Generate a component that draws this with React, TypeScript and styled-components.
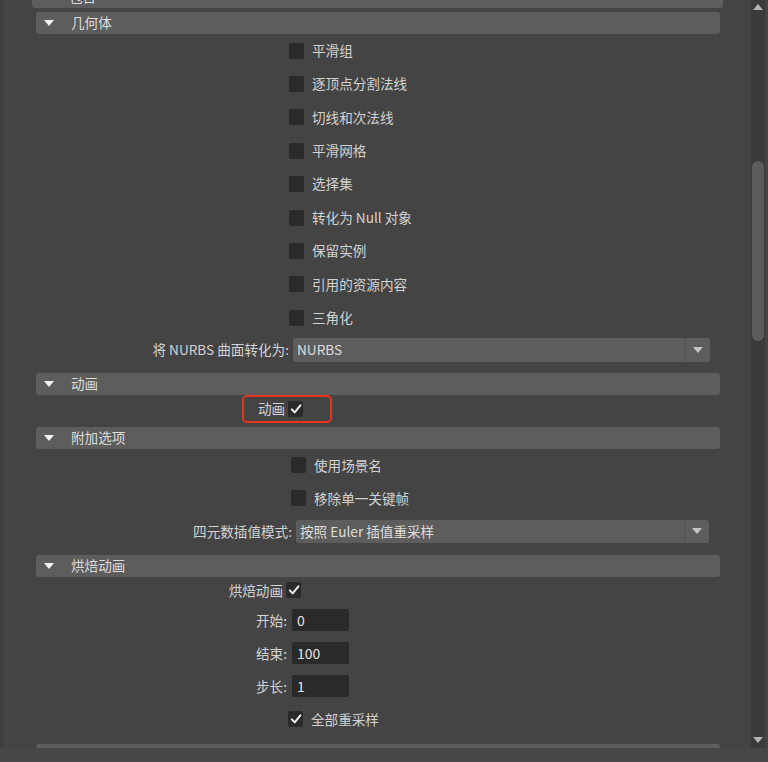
import React from "react";
import styled, { createGlobalStyle } from "styled-components";

const Global = createGlobalStyle`
  html, body { margin: 0; padding: 0; background: #444444; }
  body {
    font-family: "Noto Sans CJK SC", "Noto Sans", sans-serif;
    font-size: 13.6px;
    color: #d2d2d2;
  }
`;

const Window = styled.div`
  width: 768px;
  height: 762px;
  display: flex;
  flex-direction: column;
  overflow: hidden;
  background: #444444;
`;

const Main = styled.div`
  height: 748px;
  display: flex;
  flex-direction: row;
`;

const Content = styled.div`
  flex: 1;
  border-left: 4px solid #3f3f3f;
  overflow: hidden;
`;

const ScrollInner = styled.div`
  margin-top: -14px;
  padding: 0 28px 0 28px;
`;

const Children = styled.div`
  padding: 4px 3px 0 4px;
`;

const HeaderBar = styled.div`
  height: 22px;
  background: #5d5d5d;
  border-radius: 3px;
  display: flex;
  align-items: center;
  flex-shrink: 0;
`;

const Triangle = styled.span<{ $color?: string }>`
  width: 0;
  height: 0;
  border-left: 5.5px solid transparent;
  border-right: 5.5px solid transparent;
  border-top: 6px solid ${(p) => p.$color || "#f2f2f2"};
  margin-left: 8px;
`;

const HeaderTitle = styled.span<{ $ml: number }>`
  margin-left: ${(p) => p.$ml}px;
  color: #dcdcdc;
  line-height: 1;
  white-space: nowrap;
`;

const Body = styled.div<{ $pb: number }>`
  padding-bottom: ${(p) => p.$pb}px;
`;

const Row = styled.div<{ $col: number; $h: number; $mt?: number }>`
  display: grid;
  grid-template-columns: ${(p) => p.$col}px 1fr;
  align-items: center;
  height: ${(p) => p.$h}px;
  margin-top: ${(p) => p.$mt || 0}px;
`;

const TopRow = styled(Row)`
  align-items: start;
`;

const RowLabel = styled.span<{ $gap: number }>`
  text-align: right;
  padding-right: ${(p) => p.$gap}px;
  white-space: nowrap;
  line-height: 1;
`;

const Ctrl = styled.div`
  display: flex;
  align-items: center;
`;

const Box = styled.span`
  width: 15px;
  height: 16px;
  border-radius: 2px;
  background: #2a2a2a;
  display: inline-flex;
  align-items: center;
  justify-content: center;
  flex-shrink: 0;
`;

const CheckText = styled.span`
  margin-left: 8px;
  line-height: 1;
  white-space: nowrap;
`;

const InlineLabel = styled.span`
  margin-right: 3px;
  line-height: 1;
  white-space: nowrap;
`;

const Highlight = styled.div`
  display: inline-flex;
  align-items: center;
  height: 24px;
  border: 2px solid #e8331f;
  border-radius: 5px;
  padding: 0 27px 0 14px;
`;

const Dropdown = styled.div<{ $w: number; $h: number }>`
  width: ${(p) => p.$w}px;
  height: ${(p) => p.$h}px;
  background: #5d5d5d;
  border-radius: 3px;
  display: flex;
  align-items: stretch;
`;

const DropValue = styled.span`
  flex: 1;
  display: flex;
  align-items: center;
  padding-left: 4px;
  color: #dedede;
  line-height: 1;
  white-space: nowrap;
`;

const DropArrow = styled.span`
  width: 24px;
  border-left: 1px solid #525252;
  display: flex;
  align-items: center;
  justify-content: center;
`;

const NumField = styled.div`
  width: 57px;
  height: 22px;
  background: #2a2a2a;
  border-radius: 2px;
  display: flex;
  align-items: center;
  padding-left: 5px;
  box-sizing: border-box;
  color: #e2e2e2;
  font-size: 14px;
  line-height: 1;
`;

const Scrollbar = styled.div`
  width: 14px;
  margin-right: 3px;
  background: #3a3a3a;
  display: flex;
  flex-direction: column;
  align-items: center;
`;

const ScrollArrow = styled.span<{ $up?: boolean }>`
  width: 0;
  height: 0;
  border-left: 5.5px solid transparent;
  border-right: 5.5px solid transparent;
  ${(p) =>
    p.$up
      ? "border-bottom: 6px solid #b4b4b4; margin-top: 4px;"
      : "border-top: 6px solid #b4b4b4; margin-bottom: 5px;"}
`;

const Thumb = styled.div`
  width: 12px;
  height: 180px;
  margin-top: 151px;
  border-radius: 6px;
  background: #5b5b5b;
`;

const Spacer = styled.div`
  flex: 1;
`;

const BottomStrip = styled.div`
  height: 14px;
  background: #474747;
`;

const Check = () => (
  <svg width="12" height="12" viewBox="0 0 12 12">
    <path d="M1.8 6.4 L4.7 9.4 L10.4 2.4" fill="none" stroke="#f0f0f0" strokeWidth="2" strokeLinecap="round" strokeLinejoin="round" />
  </svg>
);

const Header = ({ title, ml = 17 }: { title?: string; ml?: number }) => (
  <HeaderBar>
    <Triangle />
    {title && <HeaderTitle $ml={ml}>{title}</HeaderTitle>}
  </HeaderBar>
);

const CheckRow = ({ label, col, h, checked }: { label: string; col: number; h: number; checked?: boolean }) => (
  <Row $col={col} $h={h}>
    <span />
    <Ctrl>
      <Box>{checked && <Check />}</Box>
      <CheckText>{label}</CheckText>
    </Ctrl>
  </Row>
);

const DropRow = ({ label, value, col, w, h, mt }: { label: string; value: string; col: number; w: number; h: number; mt: number }) => (
  <Row $col={col} $h={h} $mt={mt}>
    <RowLabel $gap={4}>{label}</RowLabel>
    <Dropdown $w={w} $h={h}>
      <DropValue>{value}</DropValue>
      <DropArrow>
        <Triangle $color="#c4c4c4" style={{ marginLeft: 0 }} />
      </DropArrow>
    </Dropdown>
  </Row>
);

const NumRow = ({ label, value }: { label: string; value: string }) => (
  <Row $col={256} $h={33}>
    <RowLabel $gap={5}>{label}</RowLabel>
    <NumField>{value}</NumField>
  </Row>
);

const geometry = ["平滑组", "逐顶点分割法线", "切线和次法线", "平滑网格", "选择集", "转化为 Null 对象", "保留实例", "引用的资源内容", "三角化"];

export default function App() {
  return (
    <>
      <Global />
      <Window>
        <Main>
          <Content>
            <ScrollInner>
              <Header title="包含" ml={19} />
              <Children>
                <Header title="几何体" />
                <Body $pb={11}>
                  {geometry.map((g) => (
                    <CheckRow key={g} label={g} col={253} h={33.4} />
                  ))}
                  <DropRow label="将 NURBS 曲面转化为:" value="NURBS" col={257} w={417} h={24} mt={3.4} />
                </Body>

                <Header title="动画" />
                <Body $pb={0}>
                  <TopRow $col={206} $h={32}>
                    <span />
                    <Ctrl>
                      <Highlight>
                        <InlineLabel>动画</InlineLabel>
                        <Box>
                          <Check />
                        </Box>
                      </Highlight>
                    </Ctrl>
                  </TopRow>
                </Body>

                <Header title="附加选项" />
                <Body $pb={12}>
                  <CheckRow label="使用场景名" col={255} h={33} />
                  <CheckRow label="移除单一关键帧" col={255} h={33} />
                  <DropRow label="四元数插值模式:" value="按照 Euler 插值重采样" col={260} w={413} h={23} mt={5} />
                </Body>

                <Header title="烘焙动画" />
                <Body $pb={8}>
                  <Row $col={250} $h={27}>
                    <RowLabel $gap={3}>烘焙动画</RowLabel>
                    <Ctrl>
                      <Box>
                        <Check />
                      </Box>
                    </Ctrl>
                  </Row>
                  <NumRow label="开始:" value="0" />
                  <NumRow label="结束:" value="100" />
                  <NumRow label="步长:" value="1" />
                  <CheckRow label="全部重采样" col={252} h={33} checked />
                </Body>
                <Header />
              </Children>
            </ScrollInner>
          </Content>
          <Scrollbar>
            <ScrollArrow $up />
            <Thumb />
            <Spacer />
            <ScrollArrow />
          </Scrollbar>
        </Main>
        <BottomStrip />
      </Window>
    </>
  );
}
